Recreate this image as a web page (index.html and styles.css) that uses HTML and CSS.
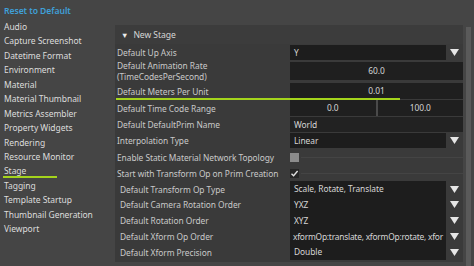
FILE: index.html
```html
<!DOCTYPE html>
<html>
<head>
<meta charset="utf-8">
<link rel="stylesheet" href="styles.css">
</head>
<body>
<div class="top"><span class="reset">Reset to Default</span></div>
<div class="main">
  <ul class="side">
    <li>Audio</li>
    <li>Capture Screenshot</li>
    <li>Datetime Format</li>
    <li>Environment</li>
    <li>Material</li>
    <li>Material Thumbnail</li>
    <li>Metrics Assembler</li>
    <li>Property Widgets</li>
    <li>Rendering</li>
    <li>Resource Monitor</li>
    <li class="sel">Stage</li>
    <li>Tagging</li>
    <li>Template Startup</li>
    <li>Thumbnail Generation</li>
    <li>Viewport</li>
  </ul>
  <div class="panel">
    <div class="head"><span class="tri">▼</span>New Stage</div>
    <div class="row r16"><div class="lbl">Default Up Axis</div><div class="dd"><div class="dfield">Y</div><div class="arr"><svg width="9" height="7" viewBox="0 0 9 7"><path d="M0 0H9L4.5 7Z" fill="#e6e6e6"/></svg></div></div></div>
    <div class="row r22"><div class="lbl two">Default Animation Rate<br>(TimeCodesPerSecond)</div><div class="num">60.0</div></div>
    <div class="row r18 hl"><div class="lbl">Default Meters Per Unit</div><div class="num">0.01</div><div class="greenline"></div></div>
    <div class="row r16"><div class="lbl">Default Time Code Range</div><div class="pair"><div class="num">0.0</div><div class="sep"></div><div class="num">100.0</div></div></div>
    <div class="row r16"><div class="lbl">Default DefaultPrim Name</div><div class="txt">World</div></div>
    <div class="row r17"><div class="lbl">Interpolation Type</div><div class="dd"><div class="dfield">Linear</div><div class="arr"><svg width="9" height="7" viewBox="0 0 9 7"><path d="M0 0H9L4.5 7Z" fill="#e6e6e6"/></svg></div></div></div>
    <div class="row r16"><div class="lbl">Enable Static Material Network Topology</div><div class="chkwrap"><div class="chk off"></div><div class="line"></div></div></div>
    <div class="row r16"><div class="lbl">Start with Transform Op on Prim Creation</div><div class="chkwrap"><div class="chk on"><svg width="9" height="9" viewBox="0 0 9 9"><path d="M1.5 4.8L3.6 6.8L7.6 2" stroke="#e0e0e0" stroke-width="1.4" fill="none"/></svg></div><div class="line"></div></div></div>
    <div class="group">
      <div class="row r16"><div class="lbl in">Default Transform Op Type</div><div class="dd"><div class="dfield">Scale, Rotate, Translate</div><div class="arr"><svg width="9" height="7" viewBox="0 0 9 7"><path d="M0 0H9L4.5 7Z" fill="#e6e6e6"/></svg></div></div></div>
      <div class="row r15"><div class="lbl in">Default Camera Rotation Order</div><div class="dd"><div class="dfield">YXZ</div><div class="arr"><svg width="9" height="7" viewBox="0 0 9 7"><path d="M0 0H9L4.5 7Z" fill="#e6e6e6"/></svg></div></div></div>
      <div class="row r16"><div class="lbl in">Default Rotation Order</div><div class="dd"><div class="dfield">XYZ</div><div class="arr"><svg width="9" height="7" viewBox="0 0 9 7"><path d="M0 0H9L4.5 7Z" fill="#e6e6e6"/></svg></div></div></div>
      <div class="row r15"><div class="lbl in">Default Xform Op Order</div><div class="dd"><div class="dfield tight">xformOp:translate, xformOp:rotate, xfor</div><div class="arr"><svg width="9" height="7" viewBox="0 0 9 7"><path d="M0 0H9L4.5 7Z" fill="#e6e6e6"/></svg></div></div></div>
      <div class="row r16"><div class="lbl in">Default Xform Precision</div><div class="dd"><div class="dfield">Double</div><div class="arr"><svg width="9" height="7" viewBox="0 0 9 7"><path d="M0 0H9L4.5 7Z" fill="#e6e6e6"/></svg></div></div></div>
    </div>
  </div>
  <div class="scroll"><div class="thumb"></div></div>
</div>
</body>
</html>
```
FILE: styles.css
```css
* { box-sizing: border-box; }
html, body { margin: 0; padding: 0; }
body {
  width: 474px; height: 266px; overflow: hidden;
  background: #454545;
  font-family: "Noto Sans", "Open Sans", sans-serif;
  font-size: 8.4px;
  letter-spacing: -0.05px;
  color: #d2d2d2;
}
.top { height: 20px; padding: 5px 0 0 4px; }
.reset { color: #3fa0d8; font-weight: 600; font-size: 8.6px; }
.main { display: flex; height: 246px; }
.side { list-style: none; margin: 0; padding: 0; width: 115px; flex: none; }
.side li { height: 14.45px; line-height: 14.45px; padding-left: 4px; font-size: 8.5px; color: #dcdcdc; }
.side li.sel { position: relative; }
.side li.sel::after { content: ""; position: absolute; left: 3px; top: 12px; width: 54px; height: 2px; background: #a4d41c; }
.panel { width: 348px; flex: none; margin-top: 5px; background: #3a3a3a; height: 237px; display: flex; flex-direction: column; }
.head { height: 19px; display: flex; align-items: center; padding-left: 6px; background: #3c3c3c; color: #d6d6d6; font-size: 8.6px; }
.tri { font-size: 7.5px; margin-right: 5px; color: #ececec; }
.row { display: flex; align-items: center; position: relative; }
.r15 { height: 15.5px; }
.r16 { height: 16px; }
.r17 { height: 17px; }
.r18 { height: 18px; }
.r22 { height: 22px; }
.lbl { width: 175px; flex: none; padding-left: 2px; color: #c9c9c9; white-space: nowrap; }
.lbl.two { line-height: 11px; }
.lbl.in { padding-left: 5px; }
.dd { flex: 1; min-width: 0; display: flex; height: 15px; }
.dfield { flex: 1; min-width: 0; background: #1d1d1d; padding-left: 4px; line-height: 15px; white-space: nowrap; overflow: hidden; color: #d6d6d6; }
.dfield.tight { letter-spacing: -0.22px; padding-left: 3px; }
.arr { width: 17px; flex: none; display: flex; align-items: center; justify-content: center; }
.num { flex: 1; min-width: 0; height: 16px; background: #1f1f1f; text-align: center; line-height: 16px; color: #d6d6d6; }
.r22 .num { height: 18px; line-height: 18px; }
.txt { flex: 1; height: 15px; background: #222; line-height: 15px; padding-left: 4px; color: #d6d6d6; }
.pair { flex: 1; display: flex; height: 16px; }
.sep { width: 2px; background: #4a4a4a; }
.greenline { position: absolute; left: 1px; bottom: 0; width: 284px; height: 2px; background: #a4d41c; }
.chkwrap { flex: 1; display: flex; align-items: center; }
.chk { width: 9px; height: 9px; flex: none; display: flex; align-items: center; justify-content: center; }
.chk.off { background: #8c8c8c; }
.chk.on { background: #262626; }
.line { flex: 1; height: 1px; background: #444; margin-left: 2px; }
.group .dd { height: auto; align-self: stretch; }
.group .dfield { line-height: 15.5px; }
.scroll { width: 11px; flex: none; padding: 7px 3px 0 3px; }
.thumb { width: 5px; height: 239px; background: #5a5a5a; }
```
